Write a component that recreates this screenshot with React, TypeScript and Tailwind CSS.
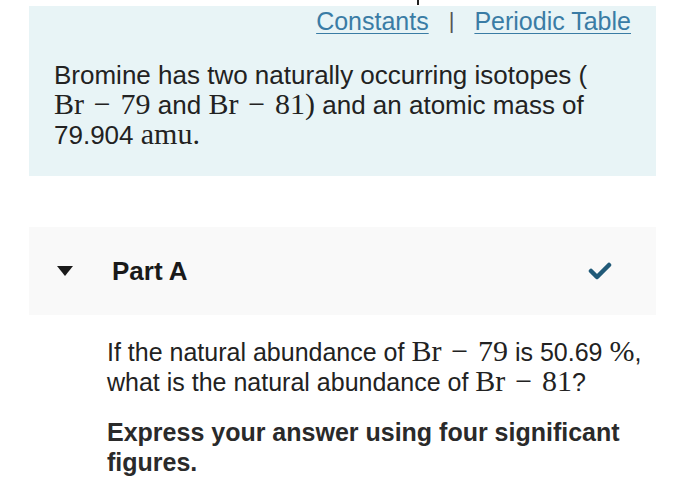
const sans = { fontFamily: '"Liberation Sans", Arial, sans-serif' };

function M({ children }: { children: React.ReactNode }) {
  return <span className="font-['Liberation_Serif',serif] text-[30px] leading-[20px]">{children}</span>;
}

function Minus() {
  return <span className="inline-block w-[0.78em] mx-[0.22em] text-center">−</span>;
}

export default function App() {
  return (
    <div className="relative w-[700px] h-[489px] bg-white text-[#222] font-['Liberation_Sans',Arial,sans-serif] overflow-hidden">
      {/* cropped glyph stub above the panel */}
      <div className="absolute left-[417px] top-0 w-[2px] h-[5px] bg-[#222]" />

      <div className="pt-[6px]">
        <div className="ml-[29px] w-[627px] bg-[#e8f4f6] pb-[26px]">
          <div className="flex justify-end items-center pr-[25px] h-[30px] text-[25px] leading-[30px]">
            <a className="text-[#3a7ca5] underline underline-offset-[3px] decoration-1">Constants</a>
            <span className="mx-[20px] text-[#555] text-[22px]">|</span>
            <a className="text-[#3a7ca5] underline underline-offset-[3px] decoration-1">Periodic Table</a>
          </div>
          <p className="mt-[24px] pl-[25px] pr-[10px] text-[26px] leading-[30px]">
            Bromine has two naturally occurring isotopes (
            <br />
            <M>Br<Minus />79</M> and <M>Br<Minus />81)</M> and an atomic mass of
            <br />
            79.904 <M>amu.</M>
          </p>
        </div>
      </div>

      <div className="mt-[51px] ml-[29px] w-[627px] h-[88px] bg-[#f9f9f9] flex items-center">
        <svg width="16" height="10" viewBox="0 0 16 10" className="ml-[28px]">
          <polygon points="0,0 16,0 8,10" fill="#1a1a1a" />
        </svg>
        <span className="ml-[39px] text-[26px] font-bold text-[#1a1a1a]">Part A</span>
        <svg width="24" height="18" viewBox="0 0 24 18" className="ml-auto mr-[44px]">
          <polyline points="3,9 9,15 21,3" fill="none" stroke="#215a78" strokeWidth="4.5" strokeLinecap="round" strokeLinejoin="round" />
        </svg>
      </div>

      <div className="pl-[107px] pr-[4px] mt-[22px] text-[25px] leading-[30px]" style={sans}>
        <p className="whitespace-nowrap">
          If the natural abundance of <M>Br<Minus />79</M> is 50.69 <M>%</M>,
          <br />
          what is the natural abundance of <M>Br<Minus />81</M>?
        </p>
        <p className="mt-[20px] font-bold text-[#2a2a2a]">
          Express your answer using four significant
          <br />
          figures.
        </p>
      </div>
    </div>
  );
}
